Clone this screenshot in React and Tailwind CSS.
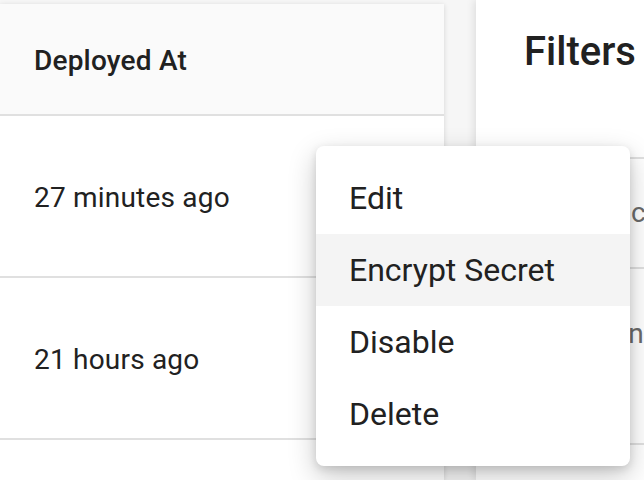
import React from "react";

const ROWS = ["27 minutes ago", "21 hours ago"];
const MENU_ITEMS = ["Edit", "Encrypt Secret", "Disable", "Delete"];

const App = () => {
  return (
    <div
      className="relative w-[644px] h-[480px] overflow-hidden bg-[#f6f6f6] text-[#212121]"
      style={{ fontFamily: "Roboto, 'Liberation Sans', sans-serif" }}
    >
      <div className="flex h-full">
        {/* Deployments table */}
        <div className="w-[444px] shrink-0 mt-[4px] bg-white shadow-[0_1px_5px_rgba(0,0,0,0.14)]">
          <div className="h-[112px] flex items-center pl-[34px] pt-[3px] bg-[#fafafa] border-b-2 border-[#e0e0e0]">
            <span className="text-[28px] font-medium tracking-[0.2px]">Deployed At</span>
          </div>
          {ROWS.map((row) => (
            <div
              key={row}
              className="h-[162px] flex items-center pl-[34px] pt-[4px] border-b-2 border-[#e0e0e0]"
            >
              <span className="text-[28px] tracking-[0.2px]">{row}</span>
            </div>
          ))}
        </div>

        {/* Filters panel */}
        <div className="ml-[32px] flex-1 bg-white shadow-[-2px_0_8px_rgba(0,0,0,0.10)]">
          <div className="h-[157px] pl-[48px] pt-[24px]">
            <h2 className="text-[40px] font-medium leading-[56px]">Filters</h2>
          </div>
          <div className="border-t-2 border-[#e0e0e0] h-[110px] flex items-center pl-[35px]">
            <span className="text-[28px] text-[#6b6b6b] whitespace-nowrap">Namespace</span>
          </div>
          <div className="border-t-2 border-[#e0e0e0] h-[176px] pl-[27px] pt-[44px]">
            <span className="text-[28px] text-[#6b6b6b] whitespace-nowrap">Application</span>
          </div>
          <div className="border-t-2 border-[#e0e0e0]" />
        </div>
      </div>

      {/* Row action menu */}
      <div className="absolute left-[316px] top-[146px] w-[314px] py-[16px] bg-white rounded-[8px] shadow-[0_10px_28px_rgba(0,0,0,0.22),0_3px_8px_rgba(0,0,0,0.12)]">
        {MENU_ITEMS.map((item) => (
          <div
            key={item}
            className={`h-[72px] flex items-center pl-[33px] text-[32px] ${
              item === "Encrypt Secret" ? "bg-[#f4f4f4]" : ""
            }`}
          >
            {item}
          </div>
        ))}
      </div>
    </div>
  );
};

export default App;
